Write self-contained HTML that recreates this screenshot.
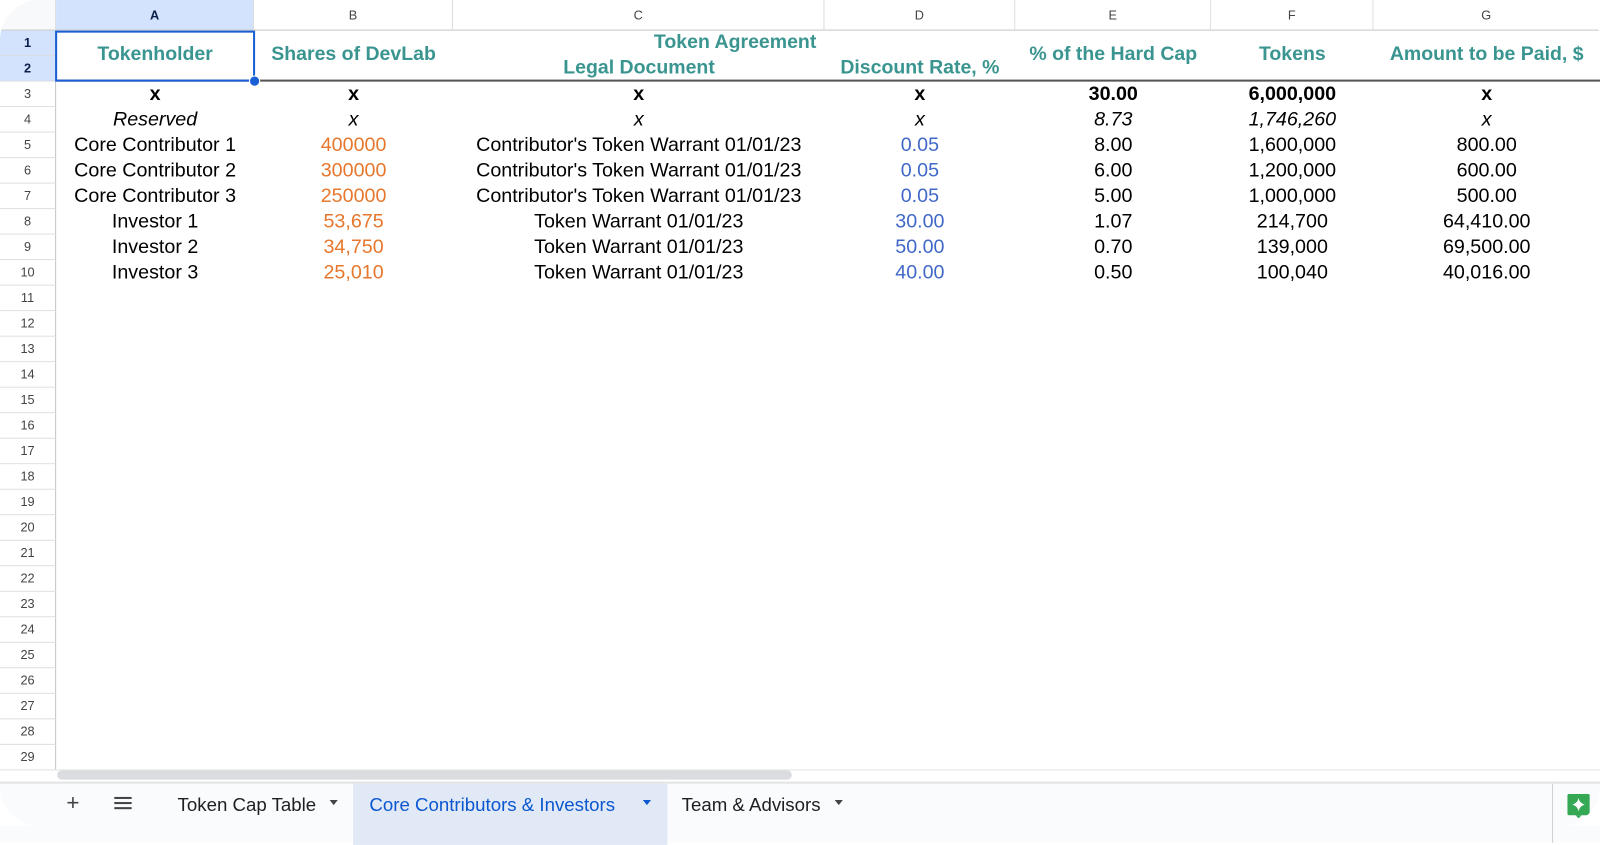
<!DOCTYPE html>
<html><head><meta charset="utf-8"><style>
*{margin:0;padding:0;box-sizing:border-box}
body{width:1600px;height:826px;background:#fff;position:relative;overflow:hidden;font-family:"Liberation Sans",Arial,sans-serif}
#w{position:absolute;left:0;top:0;width:1568px;height:810px;transform:scale(1.0204);transform-origin:0 0}
.a{position:absolute;white-space:nowrap}
.ch{position:absolute;top:0;height:30px;font-size:12.5px;color:#444;text-align:center;line-height:30px;border-right:1px solid #dadce0;border-bottom:1px solid #c4c7c5;background:#fff}
.rn{position:absolute;left:0;width:55px;height:25px;font-size:12.5px;color:#444;text-align:center;line-height:25px;border-bottom:1px solid #dadce0;border-right:1px solid #c4c7c5;background:#fff}
.c{position:absolute;height:25px;line-height:25px;font-size:19.3px;color:#000;text-align:center;white-space:nowrap}
.h{position:absolute;font-size:19.1px;font-weight:bold;color:#3a9590;text-align:center;white-space:nowrap}
.o{color:#e6772c}.b{color:#4068c8}.i{font-style:italic}.B{font-weight:bold}
.t{position:absolute;top:778px;font-size:18.3px;color:#1f1f1f;white-space:nowrap}
.k{position:absolute;top:784px;width:0;height:0;border-left:4.5px solid transparent;border-right:4.5px solid transparent;border-top:5px solid #444}
</style></head><body>
<div id="w">
<div class="ch" style="left:0;width:55px;background:#f8f9fa"></div>
<div class="ch" style="left:55px;width:194px;background:#d3e3fd;color:#0b1f4b;font-weight:bold">A</div>
<div class="ch" style="left:249px;width:195px">B</div>
<div class="ch" style="left:444px;width:364px">C</div>
<div class="ch" style="left:808px;width:187px">D</div>
<div class="ch" style="left:995px;width:192px">E</div>
<div class="ch" style="left:1187px;width:159px">F</div>
<div class="ch" style="left:1346px;width:222px">G</div>
<div class="ch" style="left:1568px;width:40px;border-right:none"></div>
<div class="rn" style="top:30px;background:#d3e3fd;color:#0b1f4b;font-weight:bold">1</div>
<div class="rn" style="top:55px;background:#d3e3fd;color:#0b1f4b;font-weight:bold">2</div>
<script>
var s='';for(var r=3;r<=29;r++){s+='<div class="rn" style="top:'+(30+(r-1)*25)+'px">'+r+'</div>';}
document.write(s);
</script>
<div class="a" style="left:55px;top:78px;width:1513px;height:2px;background:#555"></div>
<div class="h" style="left:55px;width:194px;top:43px">Tokenholder</div>
<div class="h" style="left:249px;width:195px;top:43px">Shares of DevLab</div>
<div class="h" style="left:444px;width:364px;top:31px;text-align:right;padding-right:8px">Token Agreement</div>
<div class="h" style="left:444px;width:364px;top:56px;text-align:left;padding-left:108px">Legal Document</div>
<div class="h" style="left:808px;width:187px;top:56px">Discount Rate, %</div>
<div class="h" style="left:995px;width:192px;top:43px">% of the Hard Cap</div>
<div class="h" style="left:1187px;width:159px;top:43px">Tokens</div>
<div class="h" style="left:1346px;width:222px;top:43px">Amount to be Paid, $</div>
<div class="a" style="left:54px;top:30px;width:196px;height:50px;border:2px solid #1a5fd6"></div>
<div class="a" style="left:244px;top:74px;width:11px;height:11px;border-radius:50%;background:#1a5fd6;border:1px solid #fff"></div>
<script>
var cols=[[55,194],[249,195],[444,364],[808,187],[995,192],[1187,159],[1346,222]];
var rows=[
[['x','B'],['x','B'],['x','B'],['x','B'],['30.00','B'],['6,000,000','B'],['x','B']],
[['Reserved','i'],['x','i'],['x','i'],['x','i'],['8.73','i'],['1,746,260','i'],['x','i']],
[['Core Contributor 1',''],['400000','o'],["Contributor's Token Warrant 01/01/23",''],['0.05','b'],['8.00',''],['1,600,000',''],['800.00','']],
[['Core Contributor 2',''],['300000','o'],["Contributor's Token Warrant 01/01/23",''],['0.05','b'],['6.00',''],['1,200,000',''],['600.00','']],
[['Core Contributor 3',''],['250000','o'],["Contributor's Token Warrant 01/01/23",''],['0.05','b'],['5.00',''],['1,000,000',''],['500.00','']],
[['Investor 1',''],['53,675','o'],['Token Warrant 01/01/23',''],['30.00','b'],['1.07',''],['214,700',''],['64,410.00','']],
[['Investor 2',''],['34,750','o'],['Token Warrant 01/01/23',''],['50.00','b'],['0.70',''],['139,000',''],['69,500.00','']],
[['Investor 3',''],['25,010','o'],['Token Warrant 01/01/23',''],['40.00','b'],['0.50',''],['100,040',''],['40,016.00','']]];
var s='';
for(var r=0;r<rows.length;r++)for(var c=0;c<7;c++){
s+='<div class="c '+rows[r][c][1]+'" style="left:'+cols[c][0]+'px;width:'+cols[c][1]+'px;top:'+(80+r*25)+'px">'+rows[r][c][0]+'</div>';}
document.write(s);
</script>
<div class="a" style="left:0;top:754px;width:1600px;height:12px;background:#fff;border-top:1px solid #e3e3e3"></div>
<div class="a" style="left:56px;top:755px;width:720px;height:9px;border-radius:5px;background:#dadce0"></div>
<div class="a" style="left:0;top:766px;width:1600px;height:60px;background:#f9fbfd;border-top:2px solid #e3e3e3"></div>
<div class="a" style="left:346px;top:768px;width:308px;height:60px;background:#e1e9f7"></div>
<div class="a" style="left:65px;top:774px;font-size:22px;color:#444">+</div>
<div class="a" style="left:112px;top:781px;width:17px;height:2px;background:#444;box-shadow:0 5px 0 #444,0 10px 0 #444"></div>
<div class="t" style="left:174px">Token Cap Table</div>
<div class="k" style="left:323px"></div>
<div class="t" style="left:362px;color:#0b57d0">Core Contributors &amp; Investors</div>
<div class="k" style="left:630px;border-top-color:#0b57d0"></div>
<div class="t" style="left:668px">Team &amp; Advisors</div>
<div class="k" style="left:818px"></div>
<div class="a" style="left:1521px;top:768px;width:1px;height:58px;background:#d0d0d0"></div>
<svg class="a" style="left:1536px;top:778px" width="22" height="24" viewBox="0 0 22 24"><rect x="0" y="0" width="22" height="21" rx="2" fill="#34a853"/><path d="M8 21 L11 24 L14 21Z" fill="#34a853"/><path d="M11 4 Q12 9 17 10.5 Q12 12 11 17 Q10 12 5 10.5 Q10 9 11 4Z" fill="#fff"/></svg>
</div>
<svg class="a" style="left:0;top:0" width="1600" height="826"><path d="M0 0H40A40 40 0 0 0 0 40Z M1600 0H1560A40 40 0 0 1 1600 40Z M0 826H40A40 40 0 0 1 0 786Z M1600 826H1560A40 40 0 0 0 1600 786Z" fill="#fff"/></svg>
</body></html>
